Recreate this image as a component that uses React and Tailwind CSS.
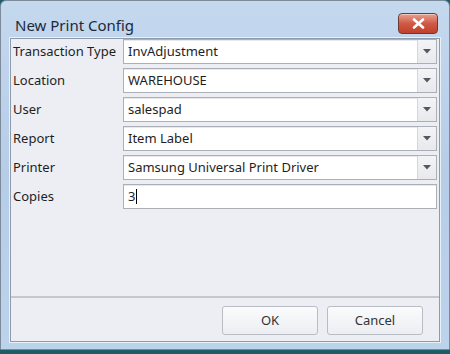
import React from 'react';

const font = { fontFamily: '"Noto Sans", "Open Sans", sans-serif' };

const rows = [
    { label: 'Transaction Type', value: 'InvAdjustment', combo: true },
    { label: 'Location', value: 'WAREHOUSE', combo: true },
    { label: 'User', value: 'salespad', combo: true },
    { label: 'Report', value: 'Item Label', combo: true },
    { label: 'Printer', value: 'Samsung Universal Print Driver', combo: true },
    { label: 'Copies', value: '3', combo: false },
];

function Field({ value, combo }) {
    return (
        <div className="flex-1 h-[25px] flex bg-white border border-[#abb0b8] shadow-[inset_0_1px_0_#e6e8ec]">
            <div className="flex-1 flex items-center pl-[4px] text-[13px] text-[#1e1e1e]">
                {value}
                {!combo && <span className="w-px h-[15px] bg-black ml-px" />}
            </div>
            {combo && (
                <div className="w-[19px] flex items-center justify-center bg-gradient-to-b from-[#f3f4f6] to-[#e7e9ed] border-l border-[#d3d6db]">
                    <svg width="8" height="5" viewBox="0 0 8 5">
                        <path d="M0 0 L8 0 L4 4.5 Z" fill="#55595f" />
                    </svg>
                </div>
            )}
        </div>
    );
}

export default function App() {
    return (
        <div className="w-[450px] h-[354px] bg-[#1f5d66] overflow-hidden" style={font}>
            <div className="h-[350px] rounded-t-[6px] border border-[#7d8a99] bg-gradient-to-b from-[#c4d8ee] via-[#b6cde8] to-[#bcd3ec] flex flex-col px-[9px] pb-[7px]">
                {/* title bar */}
                <div className="h-[37px] flex items-center justify-between pl-[5px] pr-[2px] pt-[8px]">
                    <span className="text-[15px] text-[#1b2a3a] mt-[4px]">New Print Config</span>
                    <div className="w-[40px] h-[21px] rounded-[4px] border border-[#6b3a33] bg-gradient-to-b from-[#e6a193] via-[#cf5a45] to-[#c0402c] flex items-center justify-center shadow-[inset_0_1px_0_#f4c8bd]">
                        <svg width="13" height="11" viewBox="0 0 13 11">
                            <path d="M2 1.5 L11 9.5 M11 1.5 L2 9.5" stroke="#ffffff" strokeWidth="2.6" strokeLinecap="round" />
                        </svg>
                    </div>
                </div>
                {/* client */}
                <div className="flex-1 flex flex-col bg-[#eceef4] border border-[#8d9bad] shadow-[0_0_0_1px_#e8f0f8]">
                    <div className="flex-1 flex flex-col gap-[4px] pl-[2px] pr-[2px]">
                        {rows.map((r) => (
                            <div key={r.label} className="flex items-center">
                                <div className="w-[110px] text-[13px] text-[#1e1e1e]">{r.label}</div>
                                <Field value={r.value} combo={r.combo} />
                            </div>
                        ))}
                    </div>
                    <div className="h-[45px] border-t-2 border-[#c3c8d0] flex items-start justify-end gap-[9px] pt-[8px] pr-[16px]">
                        <button className="w-[96px] h-[29px] rounded-[3px] border border-[#b8bcc4] bg-gradient-to-b from-[#fafbfc] to-[#eceef2] text-[13px] text-[#333]">OK</button>
                        <button className="w-[96px] h-[29px] rounded-[3px] border border-[#b8bcc4] bg-gradient-to-b from-[#fafbfc] to-[#eceef2] text-[13px] text-[#333]">Cancel</button>
                    </div>
                </div>
            </div>
        </div>
    );
}
